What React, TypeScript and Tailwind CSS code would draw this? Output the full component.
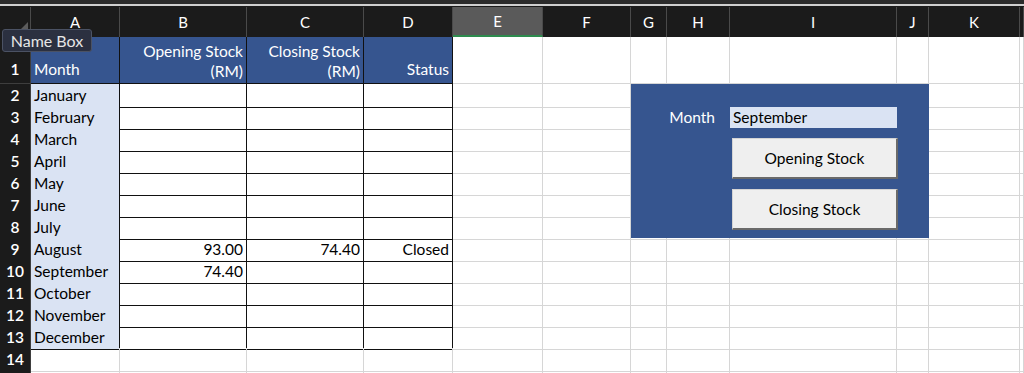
const cols = ['A', 'B', 'C', 'D', 'E', 'F', 'G', 'H', 'I', 'J', 'K', ''];

const months = [
  'January',
  'February',
  'March',
  'April',
  'May',
  'June',
  'July',
  'August',
  'September',
  'October',
  'November',
  'December',
];

// values for B, C, D keyed by month
const stock: Record<string, string[]> = {
  August: ['93.00', '74.40', 'Closed'],
  September: ['74.40', '', ''],
};

const gridCols =
  'grid grid-cols-[31px_89px_127px_117px_89px_90px_88px_36px_63px_167px_32px_91px_1fr]';

function HeaderBar() {
  return (
    <div className={`${gridCols} h-[30px] bg-[#1b1b1b] text-[15px] text-white`}>
      <div className="relative border-r border-[#4a4a4a]">
        <svg className="absolute left-[15px] top-[15px]" width="13" height="13" viewBox="0 0 13 13">
          <polygon points="13,0 13,13 0,13" fill="#5c5c5c" />
        </svg>
      </div>
      {cols.map((c) => (
        <div
          key={c || 'end'}
          className={`flex items-center justify-center border-r border-[#4a4a4a] ${
            c === 'E' ? 'border-b-2 border-b-[#2e8b4e] bg-[#5a5a5a]' : ''
          }`}
        >
          {c}
        </div>
      ))}
    </div>
  );
}

function Cell({
  children,
  className = '',
}: {
  children?: React.ReactNode;
  className?: string;
}) {
  return <div className={`flex items-center border-r border-b ${className}`}>{children}</div>;
}

function RowNum({ n, tall }: { n?: number; tall?: boolean }) {
  return (
    <div
      className={`flex ${tall ? 'items-end pb-[2px]' : 'items-center'} justify-center border-r border-b border-[#3e3e3e] bg-[#1b1b1b] text-[15.5px] font-semibold text-white`}
    >
      {n}
    </div>
  );
}

export default function App() {
  const grey = 'border-[#d6d6d6]';
  const black = 'border-[#111]';

  return (
    <div className="relative h-[373px] w-[1024px] overflow-hidden bg-white font-['Lato',sans-serif] text-[15.5px] text-black">
      <div className="h-[4px] bg-[#2b2b2b]" />
      <div className="h-[3px] border-b border-[#1b1b1b] bg-[#cfcfcf]" />
      <HeaderBar />

      {/* row 1: table headings */}
      <div className={`${gridCols} h-[47px]`}>
        <RowNum n={1} tall />
        <Cell className={`${black} items-end bg-[#36558f] px-[3px] pb-[2px] text-white`}>Month</Cell>
        <Cell className={`${black} items-end justify-end bg-[#36558f] px-[3px] pb-[2px] text-right leading-[20px] text-white`}>
          Opening Stock
          <br />
          (RM)
        </Cell>
        <Cell className={`${black} items-end justify-end bg-[#36558f] px-[3px] pb-[2px] text-right leading-[20px] text-white`}>
          Closing Stock
          <br />
          (RM)
        </Cell>
        <Cell className={`${black} items-end justify-end bg-[#36558f] px-[3px] pb-[2px] text-white`}>Status</Cell>
        {cols.slice(4).map((c) => (
          <Cell key={c || 'end'} className={grey} />
        ))}
      </div>

      {/* rows 2-13 */}
      {months.map((m, i) => {
        const v = stock[m] || ['', '', ''];
        return (
          <div key={m} className={`${gridCols} h-[22px]`}>
            <RowNum n={i + 2} />
            <Cell className={`${black} bg-[#dae3f3] px-[3px]`}>{m}</Cell>
            <Cell className={`${black} justify-end px-[3px]`}>{v[0]}</Cell>
            <Cell className={`${black} justify-end px-[3px]`}>{v[1]}</Cell>
            <Cell className={`${black} justify-end px-[3px]`}>{v[2]}</Cell>
            {cols.slice(4).map((c) => (
              <Cell key={c || 'end'} className={grey} />
            ))}
          </div>
        );
      })}

      {/* row 14, and the top of row 15 (its number is below the fold) */}
      {[14, 15].map((n) => (
        <div key={n} className={`${gridCols} h-[22px]`}>
          <RowNum n={n === 14 ? n : undefined} />
          {cols.map((c) => (
            <Cell key={c || 'end'} className={grey} />
          ))}
        </div>
      ))}

      {/* Name Box tooltip */}
      <div className="absolute left-[2px] top-[29px] flex h-[23px] w-[90px] items-center justify-center rounded-[3px] border border-[#4b5264] bg-[#2b3040] text-[16px] text-[#e6e6e6]">
        Name Box
      </div>

      {/* control panel shape */}
      <div className="absolute left-[631px] top-[84px] h-[154px] w-[298px] bg-[#36558f] pt-[22px]">
        <div className="flex items-center">
          <div className="w-[99px] pr-[15px] text-right text-white">Month</div>
          <div className="flex h-[21px] w-[167px] items-center bg-[#dae3f3] px-[3px]">September</div>
        </div>
        <div className="ml-[101px] mt-[9px] flex w-[166px] flex-col gap-[10px]">
          <button className="h-[41px] w-[166px] border border-[#d4d4d4] border-r-2 border-b-2 border-r-[#6a6a6a] border-b-[#6a6a6a] bg-[#efefef] text-[15.5px]">
            Opening Stock
          </button>
          <button className="h-[41px] w-[166px] border border-[#d4d4d4] border-r-2 border-b-2 border-r-[#6a6a6a] border-b-[#6a6a6a] bg-[#efefef] text-[15.5px]">
            Closing Stock
          </button>
        </div>
      </div>
    </div>
  );
}
